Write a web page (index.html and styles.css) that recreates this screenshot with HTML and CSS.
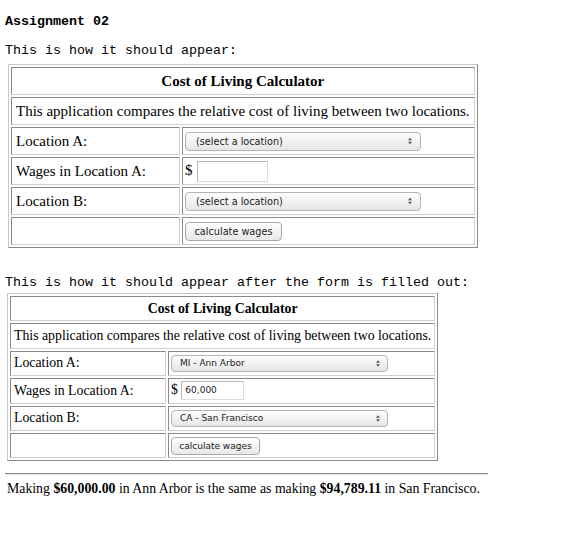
FILE: index.html
```html
<!DOCTYPE html>
<html lang="en">

<head>
    <meta charset="UTF-8">
    <title>Assignment 02</title>
    <link rel="stylesheet" href="styles.css">
</head>

<body>
    <div class="heading">Assignment 02</div>

    <div class="note first">This is how it should appear:</div>

    <table class="calc big">
        <tr>
            <th colspan="2">Cost of Living Calculator</th>
        </tr>
        <tr>
            <td colspan="2">This application compares the relative cost of living between two locations.</td>
        </tr>
        <tr>
            <td class="label">Location A:</td>
            <td class="field"><span class="select">(select a location)<svg class="arrows" viewBox="0 0 6 10"><path d="M3 0 L6 4 H0 Z M3 10 L6 6 H0 Z" /></svg></span></td>
        </tr>
        <tr>
            <td class="label">Wages in Location A:</td>
            <td class="field">$ <span class="input"></span></td>
        </tr>
        <tr>
            <td class="label">Location B:</td>
            <td class="field"><span class="select">(select a location)<svg class="arrows" viewBox="0 0 6 10"><path d="M3 0 L6 4 H0 Z M3 10 L6 6 H0 Z" /></svg></span></td>
        </tr>
        <tr>
            <td class="label"></td>
            <td class="field"><span class="button">calculate wages</span></td>
        </tr>
    </table>

    <div class="note second">This is how it should appear after the form is filled out:</div>

    <table class="calc small">
        <tr>
            <th colspan="2">Cost of Living Calculator</th>
        </tr>
        <tr>
            <td colspan="2">This application compares the relative cost of living between two locations.</td>
        </tr>
        <tr>
            <td class="label">Location A:</td>
            <td class="field"><span class="select">MI - Ann Arbor<svg class="arrows" viewBox="0 0 6 10"><path d="M3 0 L6 4 H0 Z M3 10 L6 6 H0 Z" /></svg></span></td>
        </tr>
        <tr>
            <td class="label">Wages in Location A:</td>
            <td class="field">$ <span class="input">60,000</span></td>
        </tr>
        <tr>
            <td class="label">Location B:</td>
            <td class="field"><span class="select">CA - San Francisco<svg class="arrows" viewBox="0 0 6 10"><path d="M3 0 L6 4 H0 Z M3 10 L6 6 H0 Z" /></svg></span></td>
        </tr>
        <tr>
            <td class="label"></td>
            <td class="field"><span class="button">calculate wages</span></td>
        </tr>
    </table>

    <hr>

    <p class="result">Making <b>$60,000.00</b> in Ann Arbor is the same as making <b>$94,789.11</b> in San Francisco.</p>
</body>

</html>
```

FILE: styles.css
```css
body {
    margin: 0;
    padding: 0 5px;
    background: #fff;
    color: #000;
}

.heading,
.note {
    font-family: "Liberation Mono", monospace;
    font-size: 13.33px;
    line-height: 16px;
}

.heading {
    font-weight: bold;
    margin-top: 14px;
}

.note.first {
    margin-top: 13px;
}

.note.second {
    margin-top: 27px;
}

/* calculator tables */
.calc {
    font-family: "Liberation Serif", serif;
    border: 1px solid;
    border-color: #c8c8c8 #8a8a8a #8a8a8a #c8c8c8;
    border-spacing: 2px;
}

.calc th,
.calc td {
    border: 1px solid;
    border-color: #8a8a8a #d0d0d0 #d0d0d0 #8a8a8a;
    vertical-align: middle;
    text-align: left;
    white-space: nowrap;
}

.calc th {
    text-align: center;
}

.big {
    margin: 5px 0 0 3px;
    width: 469px;
    font-size: 15px;
}

.big th,
.big td {
    height: 26px;
    padding: 0 4px;
}

.big .label {
    width: 159px;
}

.big .field {
    padding: 0 2px;
}

.small {
    margin: 2px 0 0 2px;
    width: 430px;
    font-size: 13.8px;
}

.small th,
.small td {
    height: 23.4px;
    padding: 0 3px;
}

.small .label {
    width: 148px;
}

.small .field {
    padding: 0 2px;
}

/* form controls */
.select,
.button,
.input {
    display: inline-block;
    box-sizing: border-box;
    font-family: "DejaVu Sans", sans-serif;
    vertical-align: middle;
    color: #222;
}

.select {
    position: relative;
    border: 1px solid #b4b4b4;
    border-radius: 4px;
    background: linear-gradient(#fdfdfd, #e6e6e6);
}

.arrows {
    position: absolute;
    top: 50%;
    fill: #555;
}

.big .select {
    width: 236px;
    height: 19px;
    padding-left: 10px;
    font-size: 9.7px;
    line-height: 17px;
}

.big .arrows {
    right: 8px;
    width: 4px;
    height: 8px;
    margin-top: -4px;
}

.small .select {
    width: 217px;
    height: 17px;
    padding-left: 8px;
    font-size: 9px;
    line-height: 15px;
}

.small .arrows {
    right: 7px;
    width: 4px;
    height: 7px;
    margin-top: -3.5px;
}

.input {
    background: #fff;
    border: 1px solid;
    border-color: #b8b8b8 #dcdcdc #dcdcdc #b8b8b8;
}

.big .input {
    width: 71px;
    height: 21px;
    margin-left: 1px;
}

.small .input {
    width: 63px;
    height: 19px;
    padding-left: 3px;
    font-size: 9px;
    line-height: 17px;
}

.button {
    border: 1px solid #a8a8a8;
    border-radius: 4px;
    background: linear-gradient(#ffffff, #e8e8e8);
    text-align: center;
}

.big .button {
    width: 97px;
    height: 19px;
    font-size: 9.7px;
    line-height: 17px;
}

.small .button {
    width: 89px;
    height: 18px;
    font-size: 9px;
    line-height: 16px;
}

hr {
    margin: 12px 0 0;
    width: 483px;
    border: 0;
    border-top: 1px solid #888;
    border-bottom: 1px solid #e4e4e4;
}

.result {
    margin: 5px 0 0 2px;
    font-family: "Liberation Serif", serif;
    font-size: 13.8px;
    line-height: 18px;
}
```
